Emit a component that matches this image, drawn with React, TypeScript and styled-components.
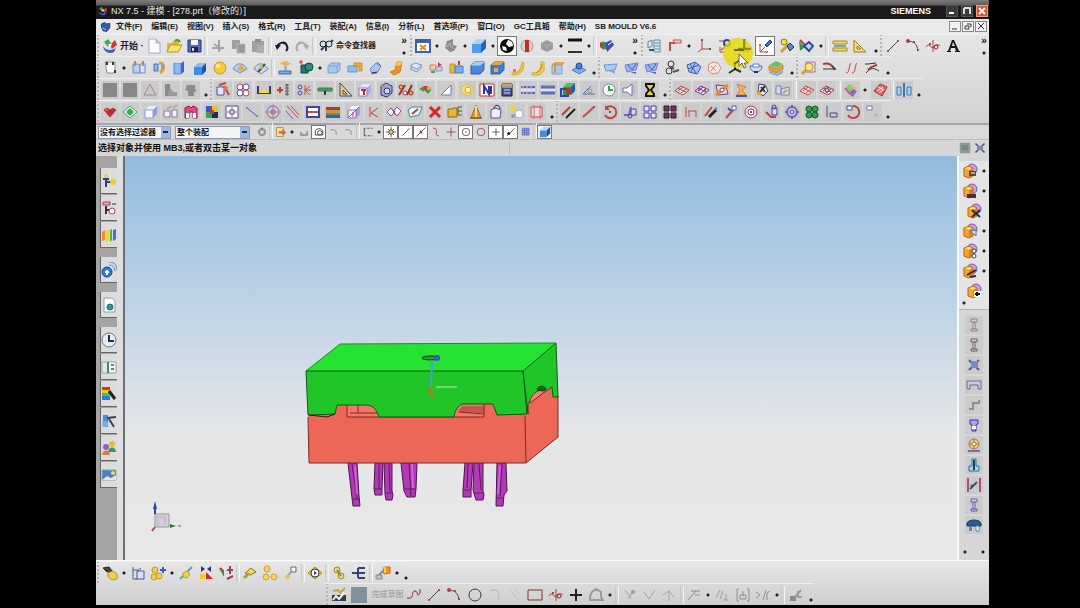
import React from "react";
import styled, { createGlobalStyle, css } from "styled-components";

const GlobalStyle = createGlobalStyle`
  * { box-sizing: border-box; }
  html, body { margin: 0; background: #000; }
  body, button, select {
    font-family: "Liberation Sans", "Noto Sans CJK SC", sans-serif;
    font-size: 9px;
    line-height: 12px;
    color: #111;
  }
`;

/* ---------- icon drawings, on a 16 unit grid ---------- */

type Shape = [d: string, fill?: string, stroke?: string, width?: number];

const circle = (x: number, y: number, r: number) =>
  `M${x - r} ${y}a${r} ${r} 0 1 0 ${2 * r} 0a${r} ${r} 0 1 0 ${-2 * r} 0z`;
const rect = (x: number, y: number, w: number, h: number) => `M${x} ${y}h${w}v${h}h${-w}z`;

const cube = (top: string, front: string, side: string, x = 2, y = 2, s = 12): Shape[] => {
  const k = Math.round(s / 3);
  return [
    [`M${x} ${y + k}l${k} ${-k}h${s - k}l${-k} ${k}z`, top],
    [rect(x, y + k, s - k, s - k), front],
    [`M${x + s - k} ${y + k}l${k} ${-k}v${s - k}l${-k} ${k}z`, side],
  ];
};
const puzzle = (extra: Shape[]): Shape[] => [
  [circle(10, 6, 5), "#c9a0e0", "#8a4fb0"],
  ["M2 5l5-2 4 2v8l-4 2-5-2z", "#f7a52a", "#b86a10"],
  ["M7 7v8l4-2v-8z", "#e07f14"],
  ["M3 5l4-1 3 1-3 2z", "#ffe07a"],
  ...extra,
];
const sheet = (color: string, extra: Shape[] = []): Shape[] => [
  ["M1 9l6-5 8 4-6 5z", "#f6dede", color],
  ["M4 9l5-4M7 11l5-4M4 6l8 4", "none", color],
  ...extra,
];
const bolt = (color: string): Shape[] => [
  [rect(5, 2, 6, 3), "#d8d4e8", color],
  [rect(7, 5, 2, 7), "#eee", color],
  [rect(5, 12, 6, 2), "#d8d4e8", color],
];

const icons: Record<string, Shape[]> = {
  nx: [
    ["M2 4l4-3 3 4-3 4z", "#3fae4a"],
    ["M8 7l5-5 2 5-5 4z", "#d43a2f"],
    ["M1 8c3 5 8 5 13 2l-2 4c-4 2-10 1-11-6z", "#2f62c8"],
    ["M6 6l4 0-2 4z", "#f4f4f4"],
  ],
  part: [["M2 4l4-2 3 2 4-1v6l-4 5-5-1-2-5z", "#2b62b8", "#123"], ["M3 9l5 3", "none", "#cfe2ff"]],
  newFile: [["M3 1h7l4 4v10H3z", "#fdfdff", "#a9a9c4"], ["M10 1v4h4z", "#d5d5e8", "#a9a9c4"]],
  open: [["M1 5h5l1-2h6v10H1z", "#d9b93e"], ["M4 7h12l-4 7H1z", "#f6e36a", "#b59420"], ["M9 3c2-2 4-1 5 1", "none", "#3c9a3c", 2]],
  save: [[rect(2, 2, 13, 12), "#5468b8", "#26366e"], [rect(5, 2, 7, 5), "#f0f3fb"], [rect(5, 9, 7, 5), "#1d2540"], [rect(6, 10, 2, 3), "#cfd8ee"]],
  cut: [["M2 10h12M9 2v12M4 6l8 5", "none", "#a2a2a2", 2]],
  copy: [[rect(2, 2, 8, 9), "#a0a0a0"], [rect(7, 6, 8, 9), "#989898", "#bbb"]],
  paste: [[rect(2, 3, 12, 11), "#a0a0a0"], [rect(5, 1, 6, 3), "#8e8e8e"], [rect(7, 7, 7, 8), "#adadad"]],
  undo: [["M3 10c0-5 8-8 10-2c1 2 0 4-1 5", "none", "#1b1d33", 2], ["M1 7l6 0-4 5z", "#1b1d33"]],
  redo: [["M13 10c0-5-8-8-10-2c-1 2 0 4 1 5", "none", "#aaa", 2], ["M15 7l-6 0 4 5z", "#aaa"]],
  finder: [[circle(5, 6, 3), "#cfe0ff", "#222"], [circle(11, 6, 3), "#cfe0ff", "#222"], ["M3 12l3-3M13 4l2-2M8 8v5", "none", "#334", 2]],
  fit: [[rect(1, 2, 14, 12), "#fff", "#3d5fae", 2], [rect(1, 2, 14, 3), "#3d5fae"], ["M5 7l6 5M11 7l-6 5", "none", "#e08a2a", 2]],
  shade: [["M4 3l6-2v6l4 1-3 5-4 1-5-4z", "#8c8c8c"], ["M6 6l5 5M3 9l5-4", "none", "#c8c8c8"]],
  blueCube: cube("#a9d3f8", "#4f9fe8", "#1f66bb", 1, 1, 14),
  blackBall: [[circle(8, 8, 7), "#0a0a0a"], ["M9 2a6 6 0 0 1 5 6l-4 1-3-3z", "#fff"], ["M3 8l4 1 1 4-4-1z", "#fff"]],
  redBar: [[circle(8, 8, 6), "#d8d2d2", "#9a9a9a"], [rect(6, 2, 4, 12), "#c2302a"]],
  greyHex: [["M2 5l6-3 6 3v6l-6 3-6-3z", "#9c9c9c"], ["M2 5l6 3 6-3M8 8v6", "none", "#aaa"]],
  lineStyle: [["M1 2h14", "none", "#111", 3], ["M1 14h14", "none", "#333", 2]],
  colorTag: [["M1 4l5 2-1 6-4-3z", "#c83434"], ["M3 3l5 2v7l-4-2z", "#2d9a44"], ["M6 5l6-3 3 5-7 7z", "#3452b8"], ["M9 7l4-3", "none", "#fff"]],
  sheetList: [["M2 4l4-2v6l-4 2zM8 2h6v12H8z", "#d9ebf3", "#5a87a0"], ["M9 5h4M9 8h4M9 11h4", "none", "#4a8a9a"], ["M3 12h5", "none", "#357", 2]],
  elbow: [["M3 13V5h5", "none", "#c05048", 2], ["M6 2h8v3H8z", "#f2d5ce", "#c05048"]],
  csysA: [["M6 2v9h8M6 11l-4 3", "none", "#b0413c"], [circle(6, 2, 1), "#333"], [circle(14, 11, 1), "#333"]],
  csysB: [["M4 9v5h5M3 3h5", "none", "#b0413c"], [circle(11, 5, 3), "none", "#2a4b8f", 2], ["M5 12l5-4", "none", "#444"]],
  csysMain: [["M8 1v8M1 10h14M9 10l3 4", "none", "#333", 1], ["M3 13h8", "none", "#556"]],
  csysC: [["M3 7v7h7M3 14l5-5", "none", "#c04a3c", 1], ["M8 7l5-5 2 2-5 5z", "#3d74cf", "#1d3f86"], [circle(3, 7, 1), "#c04a3c"], [circle(10, 14, 1), "#c04a3c"]],
  wrenchTag: [[circle(6, 4, 3), "#f2d75a", "#957711"], ["M3 14l8-8", "none", "#caa52f", 3], ["M9 8l3-3 4 4-4 4z", "#5b87d0", "#234"]],
  diamondTag: [["M1 3l6 6-5 4z", "#2f9858"], ["M2 2l5 5", "none", "#cc3b30", 2], ["M6 8l5-4 4 4-4 5z", "#bfd4f6", "#2b4a98", 2]],
  rulerA: [[rect(1, 3, 14, 3), "#f1dc6a", "#a18b2d"], [rect(1, 10, 14, 3), "#f1dc6a", "#a18b2d"], ["M2 8h12", "none", "#456", 1]],
  rulerB: [["M2 14V2l12 12z", "#f3e08a", "#9b7d1f"], ["M5 11V8l4 3z", "#e4e4e4", "#9b7d1f"]],
  line: [["M3 13L13 3", "none", "#444"], [circle(3, 13, 1), "#a02a2a"], [circle(13, 3, 1), "#a02a2a"]],
  arc: [["M2 3c7 0 10 3 11 10", "none", "#444"], [circle(3, 3, 2), "#b04040"], [circle(9, 4, 1), "#a02a2a"], [circle(13, 12, 1), "#a02a2a"]],
  curveCross: [["M1 9c3-6 5 3 8 0s4-3 6-1M8 2v12", "none", "#a04444"], [circle(5, 6, 1), "#8a1f1f"], [circle(11, 9, 2), "none", "#8a1f1f"]],
  letterA: [["M2 14h4v-1h-1l1-3h4l1 3h-1v1h5v-1h-1L9 2H7L3 13H2zM7 8l1-4 2 4z", "#171717"]],

  sketch: [["M3 2h10v11H5z", "#fff", "#8d8d8d"], ["M5 2v3M11 2v3M13 10v3", "none", "#333", 2]],
  datum: [["M2 4h5l2 2v7H2z", "#b9cfee", "#6a8ac6"], ["M9 4h5v9H9z", "#d6e4f7", "#6a8ac6"], ["M4 1v5M12 1v5", "none", "#c98a3c", 2]],
  sweep: [[rect(3, 4, 4, 7), "#8fb5e8", "#456fb5"], ["M8 3c6 0 6 6 1 10", "none", "#e0a131", 3], [rect(10, 4, 3, 6), "#7aa4de"]],
  blueBox: [[rect(3, 3, 7, 11), "#8fb8f4", "#5a86d8"], ["M10 3l3-2v11l-3 2z", "#3a6cd0"], ["M3 3l3-2h7l-3 2z", "#c9e0fc"]],
  blueBlock: cube("#86bdf7", "#3f8cee", "#1e50b4", 2, 3, 12),
  sphere: [[circle(8, 8, 6), "#f0cd3c", "#c39b1e"], [circle(6, 6, 2), "#fdf0a0"]],
  saddle: [["M1 9c3-7 10-7 14 0l-7 4z", "#b7cdec", "#718fc0"], ["M5 9l4-4 4 4-4 2z", "#e9a63a"]],
  saddleMark: [["M1 9c3-7 10-7 14 0l-7 5z", "#c7d7ee", "#718fc0"], ["M5 12l7-8", "none", "#3b5a55", 2], [circle(8, 7, 2), "#e0b44a"]],
  stand: [["M3 3l6-2 5 3-6 2z", "#f0b23a"], ["M7 6h3v4H7z", "#9ab3d8"], ["M2 11h12v3H2z", "#7ea5de", "#4a6fae"]],
  union: [[rect(3, 5, 7, 8), "#24786c", "#0f453d"], [circle(11, 7, 4), "#2c8d7e", "#0f453d"], ["M1 2h4M3 0v4", "none", "#c33"]],
  slab: [["M2 6l3-3h9v7l-3 3H2z", "#a5c9f2", "#7a9fd4"], ["M2 6h9l3-3M11 6v7", "none", "#7a9fd4"]],
  slabOrange: [["M1 6h9v6H1z", "#8fbbee", "#6a94d0"], ["M7 3h8v8h-3V6H7z", "#f0a93a", "#d0902a"]],
  flange: [["M3 9l6-6 5 3-4 7-5 1z", "#a7c5ef", "#6a88c4"], ["M10 2l4 4", "none", "#c33"], ["M5 13l5-1", "none", "#224", 1]],
  orangeBend: [["M2 12l5-2 2-8 5 0-2 10-6 3z", "#f0931d", "#d87a14"], ["M9 2l5 0-1 3-5 1z", "#f9c65a"]],
  plates: [["M2 9l5-4 7 2-5 5z", "#c6d5ee", "#8398c4"], ["M2 6l5-3 7 2-5 4z", "#e2e9f5", "#8398c4"]],
  arrowBlend: [["M2 5h6v5H2z", "#f1c9a0", "#c88a58"], ["M8 7h6v4H8z", "#bcd5f4", "#7a9acc"], ["M10 2l4 3-4 2z", "#d33"], ["M3 12h4", "none", "#3a6", 2]],
  cutBlock: [["M1 4h5v9H1z", "#f0b13b", "#c8902a"], ["M6 6h8v7H6z", "#78a9e8", "#4a78c4"], ["M10 1v4", "none", "#c33", 2]],
  shellBlue: [["M2 5l4-3h9v8l-4 4H2z", "#4b87df", "#3460b4"], ["M2 5h9l4-3", "none", "#c2dcfb"], ["M2 5l4-3h9l-4 3z", "#a9ccf4"]],
  shellOrange: [["M2 5l4-3h9v8l-4 4H2z", "#3b7ce0", "#3460b4"], ["M2 5l4-3h9l-4 3z", "#f3a438"], [rect(5, 8, 4, 4), "#f3a438"]],
  chamfer: [["M2 13c6 0 9-3 10-11l2 1c0 8-3 12-12 12z", "#f0c13a", "#d8a838"], [rect(3, 9, 3, 3), "#f07f1f"]],
  blend: [["M2 13c7 0 9-4 9-11h3v9l-5 4H2z", "#f3cf57", "#d8aa38"], ["M6 13c5-2 6-5 6-9", "none", "#e07a1f"]],
  draftBox: [["M2 4l3-2h10l-2 3H2z", "#f0a03b"], [rect(2, 5, 10, 9), "#a3cdf3", "#7a9fd4"], ["M5 4v9", "none", "#e0902b", 2]],
  lens: [["M1 10l7-4 7 4-7 4z", "#7ea9e8", "#5a80c0"], [circle(8, 6, 3), "#4a7fd4", "#234a8f"]],
  flag: [["M1 5l13-1-2 6-9 1z", "#a9ccf4", "#6a95d0"], ["M6 11h6v3z", "#7caee8"]],
  flagX: [["M1 5l13-2-2 7-9 2z", "#9ab8ec", "#6a82cc"], ["M4 5l4 5 4-6", "none", "#4a56b8", 1], ["M6 12h6v2z", "#5a68c0"]],
  chain: [[circle(6, 4, 3), "none", "#333", 1], [circle(4, 11, 3), "none", "#333", 1], ["M8 12l6-2M5 7l4 2", "none", "#555", 2]],
  mesh: [["M1 5l8-3 6 5-4 7-8-2z", "#a8c0ee", "#3c59b4"], ["M4 4l6 9M9 3l-4 9M2 9l11-4", "none", "#3c59b4"]],
  rosette: [["M3 4l4-2 5 1 3 5-3 5-6 1-4-4z", "#f7e6e0", "#d88474"], ["M5 6l5 5M10 5l-5 6", "none", "#d08a4a"]],
  triad: [["M8 2v7l6 3M8 9l-6 4", "none", "#333", 2], [circle(8, 9, 1), "#111"]],
  bowl: [["M2 6h12c0 8-12 8-12 0z", "#cddcf4", "#4569b5"], ["M5 4h6v3H5z", "#fff", "#5f7fc0"], ["M6 12h4", "none", "#234", 2]],
  layers: [["M1 5l7-4 7 3-6 4z", "#6cc06a"], ["M1 6l8 3 6-4v4l-6 4-8-3z", "#e8a13a", "#c8882c"], ["M1 11l8 3 6-4v3l-6 3-8-3z", "#7fa9d9"]],
  findPart: [[rect(5, 2, 9, 10), "#f6dcdc", "#9a6fae"], [circle(8, 7, 4), "#ffe27a", "#c0902a"], ["M5 10l-4 4", "none", "#d3a32b", 3]],
  trimA: [["M1 4c6-2 9 1 12 6", "none", "#b33a34", 2], ["M1 9h12M10 6l4 3", "none", "#333"]],
  trimB: [["M3 13c4 0 3-9 5-10M9 13c4 0 3-9 5-10", "none", "#c03c36", 1]],
  trimC: [["M1 4h3l8-1M2 13c5-6 8-5 13-2", "none", "#333", 1], ["M4 10c3-4 6-4 9-5", "none", "#b33a34", 2]],

  greySquare: [[rect(1, 1, 14, 14), "#878787"]],
  greyTriangle: [["M8 2l6 11H2z", "#cfc6c6", "#9a8f8f"]],
  greyLayout: [[rect(2, 2, 5, 12), "#8a8a8a"], ["M7 6l3 4h4v4H4", "#9a9a9a"]],
  greyBlob: [["M4 3h8v4l2 2-3 1v4H5V9L2 8z", "#8c8c8c"]],
  modelX: [[rect(2, 5, 7, 8), "#e4e4f4", "#5a4fa8"], ["M9 4l5 9M4 3l7-2", "none", "#c3472f", 2], [circle(11, 6, 2), "#d98a3a"]],
  flower: [[circle(5, 5, 3), "#fff", "#c8405a"], [circle(11, 5, 3), "#fff", "#5d4cc0"], [circle(5, 11, 3), "#fff", "#5d4cc0"], [circle(11, 11, 3), "#fff", "#c8405a"]],
  caliper: [["M2 4v7h12V4", "none", "#333b7c", 2], [rect(3, 8, 10, 3), "#f2d14d"]],
  pinList: [["M1 8h6M4 5v6", "none", "#c23a30", 2], ["M9 3h4M9 6h4M9 9h4M9 12h4M11 2v12", "none", "#555"]],
  nodeK: [["M9 8h6M9 3v10M14 4l-5 4 5 5", "none", "#cc4a44"], [circle(4, 5, 2), "none", "#4a4aa8"], [circle(4, 11, 2), "none", "#4a4aa8"]],
  greenBar: [["M1 6h14v3H1z", "#48a05c", "#3a7c4a"], ["M8 9v4", "none", "#333", 2]],
  setSquare: [["M3 1v13h12z", "#f2d56a", "#40408a"], ["M6 8v4h4z", "#ddd", "#40408a"]],
  boxT: [...cube("#e9e4ff", "#fff", "#b4a8e6", 2, 2, 12), [rect(2, 6, 8, 8), "none", "#8a7ad0"], ["M4 8h5M7 8v5", "none", "#c4302a", 2]],
  capsule: [["M3 4l5-3 6 3v7l-5 4-6-2z", "#9fa8d8", "#333a70"], [circle(9, 9, 3), "#cfd8f4", "#333a70"], ["M3 3l4 2", "none", "#d68a2e", 2]],
  percent: [["M1 13L7 3M9 13l5-10", "none", "#9b2f28", 2], [circle(3, 5, 2), "#f2b13d", "#9b2f28"], [circle(7, 11, 2), "#fff", "#9b2f28"], [circle(13, 11, 2), "#f2b13d", "#9b2f28"]],
  swatchArrow: [["M1 7l5-3v6z", "#3b9c46"], ["M6 4h4v4H6z", "#e03a2c"], ["M6 8h5l3-1-4 5z", "#3b9c46"], [rect(9, 5, 4, 3), "#f2a13a"]],
  wedge: [["M3 13L13 3v10z", "#fbfbff", "#6f78bd"]],
  shellYellow: [["M2 5l6-3 6 3v5l-5 4-6-3z", "#f5dd7b", "#dcb854"], [circle(9, 8, 3), "#fff3b5", "#c99e33"]],
  letterN: [[rect(1, 2, 14, 12), "#fff", "#c5342e"], ["M5 12V4l5 8V4M12 4v8", "none", "#2c38a0", 2]],
  film: [[rect(3, 2, 10, 12), "#4b5590", "#222"], ["M3 5h10M5 8h6M5 11h6", "none", "#d5d9ee"], [rect(3, 2, 10, 2), "#e0a13a"]],
  threadA: [["M1 5h14M1 11h14", "none", "#5a6ac4", 2], ["M1 8h14", "none", "#fff"], ["M3 3v10M7 3v10M11 3v10", "none", "#cbcbcb"]],
  threadB: [["M1 5h14M1 11h14", "none", "#5a6ec8", 3], ["M1 8h14", "none", "#fff"]],
  greenCube: [...cube("#4fc05a", "#2c9a3c", "#1d5fb4", 3, 1, 12), [rect(1, 7, 7, 7), "none", "#2c48b0", 2], [circle(9, 9, 3), "#d22b2b"]],
  angle: [["M2 12L10 4M2 12h12", "none", "#5566b8", 1], [circle(9, 9, 2), "none", "#8aa46a"]],
  clock: [[circle(8, 8, 6), "#f8fbf4", "#7a86b8"], ["M8 4v4h4", "none", "#3a9a4a", 2]],
  speaker: [["M2 6h4l5-4v12l-5-4H2z", "#fff", "#6a6ac0"], ["M13 4v8", "none", "#9f9fd8"]],
  hourglass: [["M4 2h8v2l-3 4 3 4v2H4v-2l3-4-3-4z", "#e8d72b", "#111", 2]],
  sheetA: sheet("#a84a50"),
  sheetB: sheet("#5b3aa0", [[circle(5, 8, 1), "#c33"], [circle(11, 8, 1), "#c33"]]),
  sheetC: [["M2 3l10 1 2 8-10 1z", "#f5d7a8", "#6a3fa8"], ["M2 13L14 3", "none", "#e0912c", 3], [circle(8, 8, 2), "#fff", "#6a3fa8"]],
  sheetD: [["M3 2l9 3-4 3 4 5H3l3-5z", "#f3b45a", "#c8843a"], ["M2 14h11", "none", "#5a4aa8", 2]],
  sheetE: [["M4 2l6 1 3 6-5 5-5-4z", "#f3e9cf", "#3b3b8c"], ["M6 5l4 5M10 4l-5 6", "none", "#333", 2], [rect(2, 10, 4, 3), "#e8a53a"]],
  bracket: [["M1 4h5v8H1zM6 7l8-2v8H6z", "#d9dcf4", "#7a80b4"], ["M8 11l4-3", "none", "#d09a35", 2]],
  sheetRed: sheet("#c4484a"),
  sheetRed2: sheet("#a8383c", [[circle(8, 8, 2), "#bcd", "#448"]]),
  prism: [["M2 6l5-4 3 5-4 4z", "#7ad07a"], ["M7 2l7 4-4 3z", "#f3b24a"], ["M6 11l4-4 4 2-4 6z", "#7a6ed0"], ["M2 6l4 5 4 3", "none", "#d85a8a", 2]],
  redSheet: [["M2 9l6-7 7 3-5 9z", "#e3676a", "#a83238"], ["M5 9l6-4M7 11l5-4M6 5l6 3", "none", "#fff"]],
  mirror: [["M1 5h4v8H1zM11 5h4v8h-4z", "#a8ccf0", "#3f76b8"], ["M8 1v14", "none", "#3f76b8", 2]],

  redGem: [["M2 6l3-2 3 2 3-2 3 2-6 7z", "#c8242c", "#a04448"], ["M3 6h3", "none", "#f08a8a"]],
  greenGem: [["M1 8l7-6 7 6-7 6z", "#e8f8f0", "#3aa078"], ["M4 8l4-4 4 4-4 4z", "#35a84a"]],
  whiteBox: [...cube("#e9edff", "#fbfbff", "#8f9be0"), [rect(2, 6, 8, 8), "none", "#8f9be0"]],
  twoBoxes: [[rect(1, 7, 6, 6), "#f4f4f4", "#8a7ab0"], [rect(9, 6, 5, 7), "#f4f4f4", "#8a7ab0"], ["M4 5l5-3M10 4l4-3", "none", "#b5893c"]],
  clamp: [["M2 4l4-2 2 2 2-2 4 2v10h-4V8H6v6H2z", "#e8477c", "#7a1f4a"], [rect(3, 9, 3, 5), "#fff"], [rect(10, 9, 3, 5), "#fff"]],
  mosaic: [[rect(2, 2, 6, 6), "#2a5ad0"], [rect(8, 2, 6, 6), "#e8c22a"], [rect(2, 8, 6, 6), "#30a845"], [rect(8, 8, 6, 6), "#18306a"], [rect(6, 6, 4, 4), "#d8332c"]],
  framePlus: [[rect(2, 2, 12, 12), "#fff", "#444a98"], ["M8 3v10M3 8h10", "none", "#c24a4a"], [rect(6, 6, 4, 4), "#f5e6e6", "#444a98"]],
  diag: [["M2 3l12 10", "none", "#5048b0", 1]],
  target: [[circle(8, 8, 6), "none", "#7a58c0"], ["M8 0v16M0 8h16", "none", "#d08080"], [circle(8, 8, 2), "none", "#7a58c0"]],
  hatch: [["M2 2l11 12M6 2l8 9", "none", "#d04a4a"], ["M1 7l7 8", "none", "#6a5ac0"]],
  frameBar: [[rect(2, 3, 12, 10), "#fff", "#4444a0", 2], ["M3 8h10", "none", "#d04a44", 2]],
  stripes: [[rect(1, 3, 14, 3), "#8a4a38"], [rect(1, 6, 14, 3), "#e08a3a"], [rect(1, 9, 14, 2), "#4a9a6a"], [rect(1, 11, 14, 3), "#3a5ab8"]],
  splitBox: [...cube("#fff", "#f4f0ff", "#a89ae0"), [rect(2, 6, 8, 8), "none", "#7a6ac8"], ["M3 13L13 3M7 13V8", "none", "#c03a5a", 1]],
  redK: [["M4 3v10M12 4L5 9l7 4", "none", "#cc3a34", 1]],
  tiles: [["M1 8l4-4 4 4-4 4zM7 8l4-5 4 4-4 5z", "#fff", "#8a3fa8"], ["M5 4l6 8", "none", "#c8486a"]],
  gauge: [["M1 6l4-3h10l-3 8-9 2z", "#e6f8f8", "#3a8a9a"], ["M5 10l6-5", "none", "#cf3a32", 2]],
  redX: [["M3 3l10 10M13 3L3 13", "none", "#d8261c", 3]],
  folderE: [["M1 5h4l1-1h4v9H1z", "#e8b62f", "#8d6a14"], ["M11 3h4M11 7h4M11 11h4M11 3v8", "none", "#555", 1]],
  cone: [["M8 1l5 13H3z", "#e59a2c", "#a86c24"], ["M8 2v11", "none", "#f8d98a", 2], ["M2 14h12", "none", "#6a3f12"]],
  bag: [["M3 6l4-2 6 2-1 8H3z", "#f1eefc", "#5a4fa8"], ["M6 5c0-5 6-5 6 0", "none", "#333", 1]],
  balls: [[circle(5, 4, 3), "#f3d33a"], [circle(11, 10, 4), "#fff", "#a0b0d0"], [circle(5, 12, 2), "#8a9ad0"]],
  redFrame: [[rect(2, 3, 11, 10), "#f8e0e0", "#c84a4a"], ["M5 1v14M11 1v14", "none", "#d86a6a"]],
  twinSlash: [["M1 11L9 3", "none", "#cc342e", 2], ["M5 14l9-9", "none", "#222", 2]],
  redSlash: [["M2 13L13 3", "none", "#cc4a44", 2], [circle(13, 3, 1), "#4a4ab0"]],
  rotate: [["M4 4a6 6 0 1 1-1 7", "none", "#cc4238", 2], [circle(8, 8, 1), "#333"], ["M3 1v5h5z", "#cc4238"]],
  lockNode: [["M2 11h5l2-8", "none", "#8a5ac8", 2], [rect(9, 5, 5, 6), "#d6d2f4", "#5242a8"], [circle(8, 12, 2), "none", "#5242a8"]],
  quad: [[rect(2, 2, 5, 5), "#e8e4ff", "#4a3fae"], [rect(9, 2, 5, 5), "#e8e4ff", "#4a3fae"], [rect(2, 9, 5, 5), "#e8e4ff", "#4a3fae"], [rect(9, 9, 5, 5), "#e8e4ff", "#4a3fae"]],
  quadDark: [[rect(2, 2, 5, 5), "#703a58", "#331830"], [rect(9, 2, 5, 5), "#703a58", "#331830"], [rect(2, 9, 5, 5), "#703a58", "#331830"], [rect(9, 9, 5, 5), "#703a58", "#331830"]],
  dimH: [["M3 3v10M6 6v7M6 7h7v6", "none", "#b84a4a", 1]],
  penA: [["M2 12L9 3", "none", "#cc4238", 2], ["M6 13l7-7", "none", "#222", 3], ["M12 4l2 1", "none", "#5a7ad0", 2]],
  wand: [["M3 14L11 5", "none", "#c04050", 2], [rect(9, 2, 4, 4), "#fff", "#4a5ac8"], ["M5 4l3 3", "none", "#5a3fa0", 2]],
  coil: [[circle(8, 8, 6), "#f8d8da", "#c03a44", 1], [circle(8, 8, 3), "#fff", "#4a4ac0"], [circle(8, 8, 1), "#223"]],
  lockRed: [["M2 8l5 5h5", "none", "#cc3a34", 2], [rect(8, 4, 5, 7), "#dcd6f8", "#3f3aa8"], [circle(10, 3, 2), "none", "#3f3aa8"]],
  gear: [[circle(8, 8, 5), "none", "#6a62c4", 2], [circle(8, 8, 2), "#d4d0f4", "#5a52b8"], ["M8 1v3M8 12v3M1 8h3M12 8h3", "none", "#6a62c4", 2]],
  clover: [[circle(5, 5, 3), "#2f9a50", "#175a2c"], [circle(11, 5, 3), "#2f9a50", "#175a2c"], [circle(5, 11, 3), "#2f9a50", "#175a2c"], [circle(11, 11, 3), "#2f9a50", "#175a2c"]],
  stepBox: [["M3 2v11M6 9v4M6 9h7v4H6", "none", "#46468c"]],
  rotateBox: [["M8 2a6 6 0 1 1-5 9", "none", "#c83c3a", 2], [rect(2, 2, 5, 4), "#fff", "#3f3fb0"]],
  miniBoxes: [[rect(2, 2, 5, 4), "#fff", "#6a78c8"], [circle(11, 11, 2), "#a9c4a0"]],

  ring: [[circle(8, 8, 4), "none", "#999", 3], ["M8 2v3", "none", "#777", 2]],
  pageArrow: [[rect(2, 2, 9, 12), "#f4dfa0", "#9a7f3a"], ["M5 7h5V4l5 5-5 4v-3H5z", "#d06a34"]],
  smallTray: [["M4 8v4h8V7", "none", "#888", 2]],
  ghost: [["M3 12V8c0-6 10-6 10 0v4z", "#fff", "#222", 1], [circle(9, 9, 3), "none", "#222", 1]],
  hook: [["M3 5h4c4 0 4 3 4 7", "none", "#aaa", 2]],
  marquee: [["M3 13V3h2M7 3h3M12 3h2M3 13h3M8 13h3M13 13h1", "none", "#333", 1]],
  fourWay: [["M8 1v14M1 8h14", "none", "#333", 1], [circle(8, 8, 3), "#e7c85a", "#333"], ["M4 4l2 2M12 4l-2 2M4 12l2-2M12 12l-2-2", "none", "#333", 1]],
  segment: [["M3 13L13 3", "none", "#333", 1]],
  segmentMid: [["M2 14L14 2", "none", "#333"], [circle(8, 8, 2), "#b0302a"]],
  hookCurve: [["M4 3h3c3 0 0 10 3 10h2", "none", "#8a3030", 1]],
  cross: [["M8 2v12M2 8h12", "none", "#7a2f2f", 1]],
  dotCircle: [[circle(8, 8, 5), "none", "#333", 1], [circle(8, 8, 1), "#b0302a"]],
  redCircle: [[circle(8, 8, 5), "none", "#8a3a3a", 1]],
  plus: [["M8 3v10M3 8h10", "none", "#333", 1]],
  slashDot: [["M3 13L13 3", "none", "#222", 1], [circle(5, 10, 2), "#222"]],
  blueGrid: [["M3 3h9v9H3z", "#a8bde8", "#4a62b0"], ["M6 3v9M9 3v9M3 6h9M3 9h9", "none", "#4a62b0"]],
  solid: cube("#b6d2f6", "#4f86d8", "#234f9e", 1, 1, 14),
  monitor: [[rect(1, 1, 14, 14), "#8f9a94"], ["M4 4h8v7H4z", "#7c8780"]],
  expand: [["M2 2l4 4M14 2l-4 4M2 14l4-4M14 14l-4-4", "none", "#4a5280", 2], [rect(4, 5, 8, 6), "#7f88b4"]],

  tree: [[circle(5, 3, 2), "#f0c63a"], ["M5 6v8M5 9h6", "none", "#333a80", 2], [circle(12, 9, 3), "#f0c63a"], ["M2 6h6", "none", "#333a80", 2]],
  tree2: [["M2 2h7v3H2z", "#f0a8c8", "#a83a70"], ["M5 6v8M5 10h4", "none", "#333", 2], [circle(11, 11, 3), "#fff", "#c03a60"], ["M11 4h4", "none", "#333", 1]],
  books: [["M1 5l3-2v10l-3 1z", "#f08a2a"], ["M5 4l3-2v11l-3 2z", "#e8d23a"], ["M9 3l2-1v11l-2 2z", "#4ab04a"], ["M12 3l3-1v10l-3 2z", "#2f7ad8"]],
  web: [[circle(6, 10, 5), "#2f78d8", "#14489a"], ["M4 10h4M6 8v5", "none", "#fff", 2], ["M8 3c4 0 6 3 6 6M8 0c6 0 8 4 8 8", "none", "#4a8ae0", 1]],
  docWeb: [["M3 1h8l3 3v11H3z", "#fff", "#8aa0b0"], [circle(9, 10, 3), "#2f9a80", "#146a88"]],
  history: [[circle(8, 8, 7), "#e8edf5", "#6a7484", 1], ["M8 3v6h5", "none", "#222a4a", 2]],
  palette: [[rect(1, 3, 14, 11), "#fff", "#8a9a9a"], ["M7 3v11M10 6h3M10 10h3", "none", "#4a8a6a", 2], [rect(2, 4, 4, 9), "#dce8e8"]],
  rainbow: [[rect(1, 1, 8, 3), "#d8302a"], [rect(1, 4, 8, 3), "#f2c92a"], [rect(1, 7, 8, 3), "#4ac04a"], [rect(1, 10, 8, 4), "#2f78e0"], ["M8 5l6 8", "none", "#222", 3]],
  hand: [[rect(2, 2, 5, 12), "#4a8ad8"], ["M6 5l9-1M8 6l5 8", "none", "#345", 2], [circle(4, 11, 3), "#7ab0e8"]],
  people: [[circle(11, 4, 3), "#e8b83a"], ["M7 12c0-6 8-6 8 0z", "#3a9a5a"], [circle(5, 7, 3), "#9a5ac8"], ["M1 15c0-6 8-6 8 0z", "#d8804a"]],
  picture: [[rect(1, 3, 14, 10), "#4a80c8", "#8aa"], ["M1 13l5-4 4 2 5-3v5z", "#dce6f0"], [circle(12, 6, 2), "#f2e04a"]],

  pzA: puzzle([["M7 8h7v5H7z", "#4a4a5a"], ["M9 10h4", "none", "#fff"]]),
  pzB: puzzle([["M5 11h9v4H5z", "#3a3548"]]),
  pzC: puzzle([["M6 7l8 7M14 7l-8 7", "none", "#2c2c4c", 2]]),
  pzD: puzzle([["M8 8l6 5v-6z", "#c8dcf4", "#5474a8"]]),
  pzE: puzzle([[circle(12, 8, 2), "#fff", "#445"], [circle(12, 13, 2), "#fff", "#445"]]),
  pzF: puzzle([["M5 12l9-5M8 14l6-1", "none", "#234", 2]]),
  pzG: puzzle([[rect(8, 8, 7, 6), "#fff"], ["M9 11h5M11 9v4", "none", "#111", 2]]),
  boltA: bolt("#8a7a84"),
  boltB: bolt("#6a5a64"),
  boltC: bolt("#6a52b8"),
  knot: [["M3 3l10 10M13 3L3 13", "none", "#4a5a9a", 2], [rect(5, 4, 7, 7), "#7a8ac8"]],
  tray: [["M1 12V4h14v8h-3V8H4v4z", "#c9c8dc", "#6a6a98"]],
  pipe: [["M3 12h4V6h6V3", "none", "#8f8f9a", 2]],
  cup: [["M4 3h8v4l-2 1v6H6V8L4 7z", "#a8a4f0", "#3a30a8"], [rect(6, 9, 4, 3), "#fff"]],
  wheel: [[circle(8, 7, 5), "#f0c87a", "#a87a3a"], ["M8 2v10M3 7h10", "none", "#a87a3a"], [circle(8, 7, 2), "#fff", "#a87a3a"], ["M2 14h12", "none", "#7a6ab0", 2]],
  tube: [["M3 14V9h3V2h4v7h3v5z", "#9adcf0", "#2f6a98"], ["M8 3v10", "none", "#223a60", 2]],
  springBox: [["M3 2H2v12h1M13 2h1v12h-1", "none", "#b04a80", 2], ["M4 12l7-7M5 8l2 2", "none", "#4a4a6a", 2]],
  tableBlue: [["M1 6c2-4 12-4 14 0v3H1z", "#2a5a98", "#163a60"], [rect(3, 9, 3, 5), "#4a90b8"], [rect(10, 9, 3, 5), "#fff", "#58a"]],

  asmFind: [["M1 3l6-1 3 4-5 1z", "#444", "#222"], ["M6 8l5-2 4 3v5l-5 1-4-3z", "#f2d04a", "#b8922a"]],
  asmBoxes: [["M3 2v12h5M3 5h5v4", "none", "#4a5a98"], [rect(7, 6, 7, 8), "#d8e0f4", "#4a5a98"], ["M7 6l4-3", "none", "#4a5a98"]],
  asmAdd: [[circle(5, 5, 3), "#f2d04a", "#c09a2a"], [circle(4, 12, 3), "#f2d04a", "#c09a2a"], [circle(9, 11, 3), "#f2d04a", "#c09a2a"], ["M13 2v6M10 5h6", "none", "#3a5ac8", 2]],
  asmMove: [["M2 14L14 2", "none", "#6a9ad0", 2], ["M5 8l4-2 3 3-3 4-4-1z", "#f2d04a", "#c09a2a"]],
  asmMate: [["M3 1v6l4-3zM13 1v6L9 4z", "#2a2f98"], [rect(2, 9, 5, 5), "#f0c83a"], ["M8 7l7 7H8z", "#d02a22"]],
  asmAngle: [["M1 3l5 9V5z", "#2f9a58"], ["M2 3l3 3", "none", "#d03a2a", 2], ["M12 1v8M9 5h6M9 14l6-3", "none", "#a83a5a", 2]],
  asmSub: [["M3 8l6-5 5 4-6 3z", "#f2dc5a", "#8a7420"], ["M2 13l5-5", "none", "#b89c30", 3]],
  asmTrio: [[circle(5, 4, 3), "#f4d45a", "#d0a030"], [circle(4, 12, 3), "#f4d45a", "#d0a030"], [circle(12, 12, 3), "#f4d45a", "#d0a030"]],
  asmLink: [[rect(8, 2, 5, 5), "#f4f4f4", "#667"], ["M8 7l-5 6", "none", "#9aa", 2], [circle(5, 12, 2), "#f2c83a"]],
  asmEye: [["M1 8l7-6 7 6-7 6z", "#f3cf2a", "#b08a12"], [circle(8, 8, 4), "#fff", "#334"], ["M7 6l3 2-3 2z", "#223a90"]],
  asmClip: [[circle(6, 5, 3), "#e8dc7a", "#98882a", 1], [circle(10, 11, 3), "#e8dc7a", "#98882a", 1], ["M6 5l4 6", "none", "#98882a", 2]],
  asmPins: [["M1 8h6M7 3v10M7 3h7M7 8h7M7 13h7", "none", "#334278", 2]],
  asmExplode: [["M1 10h6v4H1z", "#c0c0c0", "#888"], ["M4 10L8 6", "none", "#889", 2], ["M8 2h7v6l-6 1z", "#f3941d", "#c46d0c"], ["M8 2l2 1v5", "none", "#f9d05a", 2]],

  skDone: [[rect(1, 8, 14, 6), "#333a4a"], ["M2 13l3-4 3 3 5-6", "none", "#f2f2f2", 2], ["M2 4l5-1 2 3 5-5", "none", "#c8a82a", 2]],
  skSlate: [[rect(0, 0, 16, 16), "#83919c"]],
  skProfile: [["M1 11h3c4 0 1-7 5-7s1 8 5 2v-4", "none", "#8a2f34", 1]],
  skCircle: [[circle(8, 8, 6), "none", "#3a3a3a"]],
  skFillet: [["M3 3h5c3 0 4 2 4 10", "none", "#b4b4b4", 1]],
  skChamfer: [["M3 3l9 10M8 3l4 3", "none", "#c0c0c0", 1]],
  skRect: [[rect(1, 3, 14, 10), "none", "#8a2f2f"]],
  skPlus: [["M8 2v12M2 8h12", "none", "#222", 2]],
  skPoly: [["M4 5l4-3 5 3v5l2 3H2V9z", "none", "#9a9a9a", 2]],
  skTrim: [["M4 3l6 8M12 4l-5 8", "none", "#a4a4a4", 1], [circle(12, 5, 2), "#999"]],
  skExtend: [["M3 5l5 7L14 3", "none", "#a4a4a4", 1]],
  skCorner: [["M8 14V4M2 8l6-4 5 6", "none", "#a4a4a4", 1]],
  skOffset: [["M2 13L10 4M5 4h9M9 8h5", "none", "#8a8a8a", 1]],
  skPerp: [["M2 11l4-8M6 12l3-8M9 13h6M12 7v6", "none", "#9a9a9a", 1]],
  skDim: [["M4 2H2v12h2M12 2h2v12h-2M8 4v5M5 8h6v4H5z", "none", "#8f8f8f"]],
  skMirror: [["M1 5l4 3-4 3M8 13l3-10M12 13V6l3-2", "none", "#909090", 1]],
  skAuto: [[rect(2, 9, 6, 5), "#8a8a8a"], ["M7 10l6-7M10 4v6h4", "none", "#9a9a9a", 2]],
};

const Glyph = styled.svg<{ $size: number }>`
  display: block;
  flex: none;
  width: ${(p) => p.$size}px;
  height: ${(p) => p.$size}px;
`;

function Icon({ name, size = 16 }: { name: string; size?: number }) {
  return (
    <Glyph $size={size} viewBox="0 0 16 16" aria-hidden="true">
      {(icons[name] ?? []).map(([d, fill = "none", stroke = "none", width = 1], i) => (
        <path key={i} d={d} fill={fill} stroke={stroke} strokeWidth={width} />
      ))}
    </Glyph>
  );
}

/* ---------- toolbar parts ---------- */

type Tone = "flat" | "tile";

const Row = styled.div<{ $indent?: number }>`
  display: flex;
  height: 22px;
  padding-left: ${(p) => p.$indent ?? 0}px;
`;

const Strip = styled.div<{ $width?: number }>`
  display: flex;
  align-items: center;
  justify-content: ${(p) => (p.$width ? "space-between" : "flex-start")};
  flex: ${(p) => (p.$width ? `0 0 ${p.$width}px` : "1 1 0")};
  min-width: 0;
  padding-left: 4px;
  border-top: 1px solid #efefef;
  background: radial-gradient(circle, #b4b4b4 1px, transparent 1px) 0 2px / 4px 4px repeat-y;
`;

const ToolButton = styled.button<{ $small?: boolean; $on?: boolean; $tone?: Tone }>`
  position: relative;
  display: flex;
  align-items: center;
  justify-content: center;
  flex: none;
  width: ${(p) => (p.$small ? 15 : 20)}px;
  height: ${(p) => (p.$small ? 14 : 20)}px;
  padding: 0;
  border: 1px solid transparent;
  background: none;
  ${(p) =>
    p.$tone === "tile" &&
    css`
      background: #cbcbcb;
      background-clip: padding-box;
    `}
  ${(p) =>
    p.$on &&
    css`
      border-color: #777;
      background: #fff;
    `}
`;

const DropButton = styled.button`
  flex: none;
  width: 8px;
  height: 16px;
  padding: 0;
  border: 0;
  background: radial-gradient(circle, #222 1px, transparent 2px) center / 4px 4px no-repeat;
`;

const EndButton = styled(DropButton)`
  background-position: 3px 11px;
`;

const Divider = styled.span`
  flex: none;
  width: 4px;
  height: 18px;
  border-left: 1px solid #c8c8c8;
  border-right: 1px solid #f4f4f4;
`;

const Space = styled.span`
  flex: none;
  width: 8px;
`;

const MoreButton = styled.button`
  display: flex;
  align-items: flex-start;
  justify-content: center;
  flex: none;
  width: 10px;
  height: 20px;
  margin-left: auto;
  padding: 0;
  border: 0;
  background: radial-gradient(circle, #222 1px, transparent 2px) 3px 15px / 4px 4px no-repeat;
  font-size: 10px;
  line-height: 10px;
  font-weight: bold;
`;

const LabelButton = styled.button<{ $width: number; $size?: number; $faded?: boolean }>`
  display: flex;
  align-items: center;
  gap: 2px;
  flex: none;
  width: ${(p) => p.$width}px;
  padding: 0 0 0 2px;
  border: 0;
  background: none;
  font-size: ${(p) => p.$size ?? 9}px;
  font-weight: bold;
  white-space: nowrap;
  color: ${(p) => (p.$faded ? "#a8a8a8" : "#222")};
`;

const Spot = styled.svg`
  position: absolute;
  left: -14px;
  top: 0;
  width: 32px;
  height: 32px;
  z-index: 2;
  pointer-events: none;
`;

function Pointer() {
  return (
    <Spot viewBox="0 0 32 32" aria-hidden="true">
      <circle cx="16" cy="16" r="15" fill="#e8d800" fillOpacity="0.8" />
      <path d="M22 2v9M16 12h13" stroke="#4a4a20" strokeWidth="1" />
      <path d="M12 13h10M12 27l6-4" stroke="#6a6a20" strokeWidth="2" />
      <path d="M17 17v12l3-3 2 5 2-1-2-4h4z" fill="#fff" stroke="#666" />
    </Spot>
  );
}

/* "|" divider, "." drop arrow, "," options arrow, "_" space, ">>" overflow, "*name" pressed button */
function Tools({ items, tone, small }: { items: string; tone?: Tone; small?: boolean }) {
  return (
    <>
      {items.split(" ").map((token, i) => {
        if (token === "|") return <Divider key={i} />;
        if (token === "_") return <Space key={i} />;
        if (token === ".") return <DropButton key={i} type="button" aria-label="Drop-down" />;
        if (token === ",") return <EndButton key={i} type="button" aria-label="Toolbar options" />;
        if (token === ">>") return <MoreButton key={i} type="button">»</MoreButton>;
        const on = token.startsWith("*");
        const name = on ? token.slice(1) : token;
        return (
          <ToolButton key={i} type="button" aria-label={name} $on={on} $tone={tone} $small={small}>
            <Icon name={name} size={small ? 12 : 16} />
            {name === "csysMain" && <Pointer />}
          </ToolButton>
        );
      })}
    </>
  );
}

/* ---------- window frame ---------- */

const Desktop = styled.div`
  display: flex;
  min-height: 100vh;
  padding: 0 91px 3px 96px;
  background: #000;
`;

const Frame = styled.main`
  display: flex;
  flex-direction: column;
  flex: 1;
  min-width: 0;
  background: #dedede;
`;

const TitleBar = styled.header`
  display: flex;
  align-items: center;
  gap: 3px;
  height: 19px;
  padding: 3px 1px 0 2px;
  background: linear-gradient(#7c7c7c, #5c5c5c 5px, #1a1a1a 6px);
  color: #e8e8e8;
`;

const Title = styled.h1`
  flex: 1;
  margin: 0;
  font-size: 9px;
  line-height: 12px;
  font-weight: normal;
  white-space: pre;
`;

const Brand = styled.strong`
  margin-right: 12px;
  color: #fff;
`;

const WindowButton = styled.button<{ $close?: boolean }>`
  width: 12px;
  height: 12px;
  padding: 0;
  border: 1px solid ${(p) => (p.$close ? "#f0a080" : "#555")};
  background: ${(p) => (p.$close ? "#d9542f" : "#3a3a3a")};
`;

const MenuBar = styled.nav`
  display: flex;
  align-items: center;
  gap: 4px;
  height: 15px;
  padding: 0 2px 0 4px;
  background: #e9e9e9;
`;

const MenuList = styled.div`
  display: flex;
  gap: 9px;
`;

const MenuLink = styled.a`
  color: #1a1a1a;
  font-size: 8px;
  font-weight: bold;
  text-decoration: none;
  white-space: nowrap;
`;

const ChildButtons = styled.div`
  display: flex;
  gap: 1px;
  margin-left: auto;
`;

const ChildButton = styled.button`
  width: 12px;
  height: 11px;
  padding: 0;
  border: 1px solid #888;
  background: #f2f2f2;
`;

const ToolArea = styled.div`
  padding-bottom: 1px;
  border-bottom: 2px solid #a6a6a6;
  background: linear-gradient(#e6e6e6, #d2d2d2);
`;

const SelectionBar = styled.div`
  display: flex;
  align-items: center;
  height: 14px;
  padding-left: 2px;
  background: #d9d9d9;
`;

const Filter = styled.select<{ $width: number }>`
  appearance: none;
  width: ${(p) => p.$width}px;
  height: 13px;
  margin-right: 4px;
  padding: 0 10px 0 1px;
  border: 1px solid #8a9ab0;
  border-radius: 0;
  font-size: 8px;
  line-height: 11px;
  font-weight: bold;
  background:
    linear-gradient(#16285a, #16285a) right 2px center / 5px 2px no-repeat,
    linear-gradient(#9ab8e0, #9ab8e0) right / 9px 100% no-repeat,
    #f4f4f4;
`;

const CueBar = styled.div`
  display: flex;
  align-items: center;
  height: 17px;
  padding: 0 2px;
  border-top: 1px solid #bdbdbd;
  background: #d6d6d6;
`;

const Cue = styled.p`
  flex: 0 0 412px;
  margin: 0;
  border-right: 1px solid #bbb;
  font-weight: bold;
`;

const CueTools = styled.div`
  display: flex;
  margin-left: auto;
`;

const Workspace = styled.div`
  display: flex;
  flex: 1;
  min-height: 0;
`;

const TabBar = styled.aside`
  display: flex;
  flex-direction: column;
  flex: 0 0 21px;
  gap: 1px;
  padding: 12px 0 0 4px;
  background: #a4a4a4;
`;

const Tab = styled.button<{ $apart?: boolean }>`
  display: flex;
  align-items: center;
  justify-content: center;
  height: 26px;
  margin-top: ${(p) => (p.$apart ? 8 : 0)}px;
  padding: 0;
  border: 0;
  border-left: 1px solid #666;
  border-bottom: 1px solid #666;
  background: #dcdcdc;
`;

const ViewFrame = styled.section`
  display: flex;
  flex: 1;
  min-width: 0;
  margin-left: 6px;
  border-left: 2px solid #6a6e76;
  border-right: 2px solid #fafafa;
  background: linear-gradient(#92bbdf, #b0cce5 25%, #cfdbe7 50%, #e5e6e8 68%, #e7e7e7);
`;

const Viewport = styled.svg`
  display: block;
  flex: 1;
  min-width: 0;
  contain: size;
`;

const SideBar = styled.aside`
  display: flex;
  flex-direction: column;
  flex: 0 0 30px;
  padding-top: 5px;
  background: #d6d6d6;
`;

const SideGroup = styled.div<{ $main?: boolean }>`
  display: flex;
  flex-direction: column;
  padding-left: ${(p) => (p.$main ? 1 : 5)}px;
  ${(p) =>
    p.$main &&
    css`
      padding-bottom: 8px;
      margin-bottom: 5px;
      border-bottom: 1px solid #b4b4b4;
      background:
        radial-gradient(circle, #222 1px, transparent 2px) 3px 100% / 4px 12px no-repeat,
        #e4e4e4;
    `}
`;

const SideItem = styled.div<{ $alone?: boolean }>`
  display: flex;
  align-items: center;
  padding-left: ${(p) => (p.$alone ? 4 : 0)}px;
`;

const SideEnd = styled.div`
  display: flex;
  justify-content: space-between;
  margin-top: auto;
  padding: 0 2px;
`;

const Footer = styled.footer`
  height: 45px;
  border-top: 1px solid #fafafa;
  background: linear-gradient(#e6e6e6, #cfcfcf);
`;

/* ---------- content ---------- */

const menus = ["文件(F)", "编辑(E)", "视图(V)", "插入(S)", "格式(R)", "工具(T)", "装配(A)", "信息(I)", "分析(L)", "首选项(P)", "窗口(O)", "GC工具箱", "帮助(H)", "SB MOULD V6.6"];

const tabs: [string, boolean][] = [
  ["tree", false], ["tree2", false], ["books", false], ["web", true], ["docWeb", true], ["history", true],
  ["palette", false], ["rainbow", false], ["hand", false], ["people", false], ["picture", false],
];

const puzzleTools: [string, boolean][] = [
  ["pzA", true], ["pzB", true], ["pzC", false], ["pzD", true], ["pzE", true], ["pzF", true], ["pzG", false],
];

const fastenerTools = ["boltA", "boltB", "knot", "tray", "pipe", "cup", "wheel", "tube", "springBox", "boltC", "tableBlue"];

const pins = [
  "M348 463h9l2 33 1 10h-7l-1-8z",
  "M375 463h8l-1 26v6h-7l-1-6z",
  "M384 463h8v28l1 4-1 5h-6l-1-6z",
  "M401 463h16l-1 26-1 8h-8l-3-6z",
  "M465 463h8l-2 28v6h-8v-7z",
  "M474 463h9v28l1 4-1 5h-7l-3-10z",
  "M497 463h9l1 28-3 4-1 11h-7z",
];

function Model() {
  return (
    <Viewport viewBox="125 156 832 404" role="img" aria-label="Mould assembly">
      {pins.map((d) => (
        <path key={d} d={d} fill="#b23ab4" stroke="#4a1650" />
      ))}
      <path d="M352 464l5 34M353 499h7M379 464v25M375 489h7M389 464l1 28M386 493h6M409 464l2 32M405 489h11M468 464l-1 24M463 490h8M479 464l2 26M475 493h8M502 464l-2 32M496 498h7" stroke="#5c1a66" fill="none" />
      <path d="M412 464l1 24M355 466l2 28M500 466l-2 28" stroke="#d95fdc" strokeWidth="2" />
      <path d="M308 404h218l3-3 24-15 5 11v40l-32 26H309z" fill="#ec6757" />
      <path d="M347 404h32v13h-32zM456 404h28v13h-30z" fill="#f0776a" />
      <path d="M462 406h22v7l-26-1z" fill="#c5574a" />
      <path d="M308 417l1 46h217l32-26v-41M525 416l1 47M347 404v13h137v-13M358 405v8h20M350 413h8M459 412l25 2" fill="none" stroke="#7c2a22" />
      <path d="M306 371l34-27 216-1-33 28z" fill="#26e332" />
      <path d="M306 371h217l4 43-30 1-4-11h-30c-5 1-8 6-9 13h-75c-2-6-5-12-13-12h-29l-2 9-27 1z" fill="#20c628" stroke="#0c5a12" />
      <path d="M523 371l33-28 2 54h-5l-1-10-24 16v11z" fill="#1ec727" stroke="#0c5a12" />
      <path d="M306 371l34-27 216-1" fill="none" stroke="#1c8a24" />
      <path d="M309 415l18 2 8-3" fill="none" stroke="#2a1a14" strokeWidth="1" />
      <path d="M530 401c1-6 7-11 12-11l4 1-16 12z" fill="#f08376" stroke="#7c2a22" />
      <path d="M537 390c1-5 7-5 9-1l-3 2z" fill="#0c6a18" stroke="#0c3a12" />
      <ellipse cx="431" cy="358" rx="9" ry="2" fill="#2a9c33" stroke="#123a18" />
      <circle cx="437" cy="358" r="2" fill="none" stroke="#2a5cc0" strokeWidth="2" />
      <path d="M432 360l-1 27" stroke="#48a0d0" strokeWidth="2" />
      <path d="M436 387h21" stroke="#b8f0b0" />
      <path d="M427 390l6-1M430 389v4l4 4" stroke="#b87a1c" strokeWidth="2" fill="none" />
      <path d="M155 514h14v13h-14z" fill="#d4d0dc" stroke="#9a94a8" />
      <path d="M158 517v10M155 517h10v8" stroke="#b4aec4" fill="none" />
      <path d="M155 514v-7" stroke="#3040b0" strokeWidth="2" />
      <path d="M153 509l2-8 2 8z" fill="#3040b0" />
      <path d="M169 526h5" stroke="#7aa87a" />
      <path d="M170 524l6 2-6 2z" fill="#2f7a3a" />
      <path d="M178 526h3" stroke="#3a8a46" />
      <path d="M155 527l-3 4" stroke="#b04a40" strokeWidth="2" />
    </Viewport>
  );
}

export default function App() {
  return (
    <Desktop>
      <GlobalStyle />
      <Frame>
        <TitleBar>
          <Icon name="nx" size={10} />
          <Title>NX 7.5 - 建模 - [278.prt（修改的）]</Title>
          <Brand>SIEMENS</Brand>
          <WindowButton type="button" aria-label="Minimize">
            <svg width="10" height="10" viewBox="0 0 10 10"><path d="M2 7h5" stroke="#fff" strokeWidth="2" /></svg>
          </WindowButton>
          <WindowButton type="button" aria-label="Maximize">
            <svg width="10" height="10" viewBox="0 0 10 10"><path d="M2 2h6v6M2 2v6" stroke="#ddd" strokeWidth="2" fill="none" /></svg>
          </WindowButton>
          <WindowButton type="button" aria-label="Close" $close>
            <svg width="10" height="10" viewBox="0 0 10 10"><path d="M2 2l6 6M8 2l-6 6" stroke="#fff" strokeWidth="2" /></svg>
          </WindowButton>
        </TitleBar>

        <MenuBar>
          <Icon name="part" size={12} />
          <MenuList>
            {menus.map((m) => (
              <MenuLink key={m} href="#">{m}</MenuLink>
            ))}
          </MenuList>
          <ChildButtons>
            <ChildButton type="button" aria-label="Minimize part">
              <svg width="10" height="9" viewBox="0 0 10 9"><path d="M2 7h5" stroke="#333" /></svg>
            </ChildButton>
            <ChildButton type="button" aria-label="Restore part">
              <svg width="10" height="9" viewBox="0 0 10 9"><path d="M4 2h4v3M2 4h4v3H2z" stroke="#333" fill="none" /></svg>
            </ChildButton>
            <ChildButton type="button" aria-label="Close part">
              <svg width="10" height="9" viewBox="0 0 10 9"><path d="M2 1l6 6M8 1L2 7" stroke="#333" /></svg>
            </ChildButton>
          </ChildButtons>
        </MenuBar>

        <ToolArea>
          <Row>
            <Strip $width={313}>
              <LabelButton type="button" $width={44}><Icon name="nx" />开始 ·</LabelButton>
              <Tools items="newFile open save | cut copy paste | undo redo |" />
              <LabelButton type="button" $width={80} $size={8}><Icon name="finder" />命令查找器</LabelButton>
              <Tools items=">>" />
            </Strip>
            <Strip $width={231}>
              <Tools items="fit . shade . blueCube . *blackBall redBar greyHex . lineStyle . | colorTag _ >>" />
            </Strip>
            <Strip $width={239}>
              <Tools items="sheetList elbow . csysA csysB csysMain *csysC wrenchTag diamondTag . | rulerA rulerB ," />
            </Strip>
            <Strip>
              <Tools items="line arc curveCross letterA >>" />
            </Strip>
          </Row>
          <Row>
            <Strip $width={501}>
              <Tools items="sketch . datum sweep blueBox blueBlock sphere saddle saddleMark | stand union . slab slabOrange flange orangeBend plates arrowBlend cutBlock shellBlue shellOrange chamfer blend draftBox lens ," />
            </Strip>
            <Strip $width={198}>
              <Tools items="flag flagX flagX chain mesh rosette triad bowl layers ," />
            </Strip>
            <Strip $width={96}>
              <Tools items="findPart trimA trimB trimC ," />
            </Strip>
          </Row>
          <Row>
            <Strip $width={113}>
              <Tools tone="tile" items="greySquare greySquare greyTriangle greyLayout greyBlob ," />
            </Strip>
            <Strip $width={459}>
              <Tools tone="tile" items="modelX flower caliper pinList nodeK greenBar setSquare boxT capsule percent swatchArrow wedge shellYellow letterN film threadA threadB greenCube angle clock speaker hourglass ," />
            </Strip>
            <Strip $width={254}>
              <Tools tone="tile" items="sheetA sheetB sheetC sheetD sheetE bracket | sheetRed sheetRed2 | prism . redSheet | mirror ," />
            </Strip>
          </Row>
          <Row>
            <Strip $width={459}>
              <Tools tone="tile" items="redGem greenGem whiteBox twoBoxes clamp mosaic framePlus diag target hatch frameBar stripes splitBox redK tiles gauge redX folderE cone bag balls redFrame ," />
            </Strip>
            <Strip $width={336}>
              <Tools tone="tile" items="twinSlash redSlash rotate lockNode quad quadDark dimH penA wand coil lockRed gear clover stepBox rotateBox miniBoxes ," />
            </Strip>
          </Row>
        </ToolArea>

        <SelectionBar>
          <Filter $width={73} aria-label="Type filter"><option>没有选择过滤器</option></Filter>
          <Filter $width={75} aria-label="Selection scope"><option>整个装配</option></Filter>
          <Tools small items="ring | pageArrow . smallTray *ghost hook hook | marquee . *fourWay *segment *segmentMid hookCurve cross *dotCircle redCircle *plus *slashDot blueGrid | *solid" />
        </SelectionBar>

        <CueBar>
          <Cue>选择对象并使用 MB3,或者双击某一对象</Cue>
          <CueTools>
            <Tools small items="monitor expand" />
          </CueTools>
        </CueBar>

        <Workspace>
          <TabBar>
            {tabs.map(([name, apart]) => (
              <Tab key={name} type="button" aria-label={name} $apart={apart}>
                <Icon name={name} />
              </Tab>
            ))}
          </TabBar>
          <ViewFrame>
            <Model />
          </ViewFrame>
          <SideBar>
            <SideGroup $main>
              {puzzleTools.map(([name, drop]) => (
                <SideItem key={name} $alone={!drop}>
                  <Tools items={drop ? `${name} .` : name} />
                </SideItem>
              ))}
            </SideGroup>
            <SideGroup>
              {fastenerTools.map((name) => (
                <Tools key={name} tone="tile" items={name} />
              ))}
            </SideGroup>
            <SideEnd>
              <Tools items=". ." />
            </SideEnd>
          </SideBar>
        </Workspace>

        <Footer>
          <Row>
            <Strip $width={313}>
              <Tools items="asmFind . asmBoxes asmAdd . asmMove asmMate asmAngle | asmSub asmTrio asmLink | asmEye | asmClip asmPins | asmExplode . ," />
            </Strip>
          </Row>
          <Row $indent={229}>
            <Strip $width={489}>
              <Tools items="skDone skSlate" />
              <LabelButton type="button" $width={34} $size={8} $faded>完成草图</LabelButton>
              <Tools items="skProfile line arc skCircle skFillet skChamfer skRect curveCross skPlus skPoly . | skTrim skExtend skCorner | skOffset . skPerp skDim skMirror . | skAuto ," />
            </Strip>
          </Row>
        </Footer>
      </Frame>
    </Desktop>
  );
}
